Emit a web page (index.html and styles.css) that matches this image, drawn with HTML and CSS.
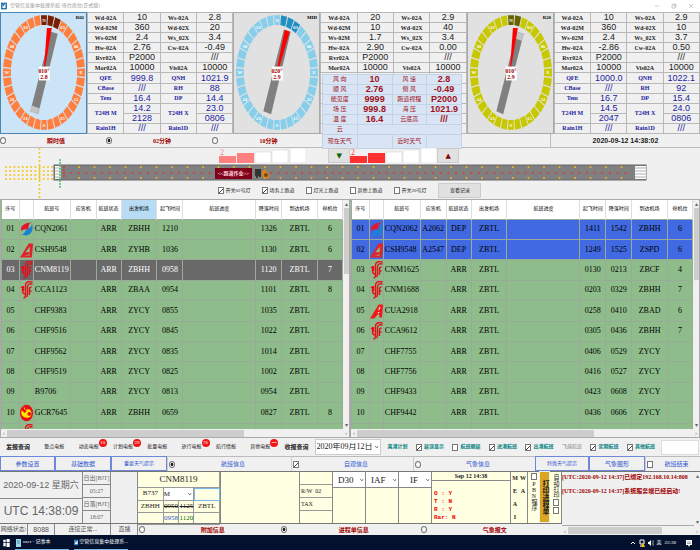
FILE: index.html
```html
<!DOCTYPE html>
<html lang="zh-CN">
<head>
    <meta charset="UTF-8">
    <meta name="viewport" content="width=device-width, initial-scale=1.0">
    <title>空管信息集中处理系统</title>
    <link rel="stylesheet" href="styles.css">
</head>
<body>
    <svg class="defs" width="0" height="0">
        <symbol id="logo-cqn" viewBox="0 0 12 14">
            <path d="M1 8C0 4 5 1 11 1 8 2 8 4 8 6 7 9 4 6 1 9Z" fill="#e01830"/>
            <path d="M1 12C5 12 4 9 6 8 9 6 11 5 11 2 13 8 10 13 5 13Z" fill="#1583d6"/>
        </symbol>
        <symbol id="logo-csh" viewBox="0 0 12 14">
            <path d="M0 14 8 1h4l-1 13Z" fill="#e0222c"/>
            <path d="M5 9l4-5v5ZM4 12l5-1v1Z" fill="#8fbc8b"/>
        </symbol>
        <symbol id="logo-cca" viewBox="0 0 12 18">
            <path d="M12 1C8 0 5 1 5 4v10q0 3-2 3M12 3Q7 2 7 6v7q0 2-1 3M2 5v5q0 3 3 3M1 6v1M9 14V8q0-2 2-2M9 10h2M3 5v5" fill="none" stroke="#e3101c" stroke-width="1.400"/>
        </symbol>
        <symbol id="logo-cua" viewBox="0 0 12 14">
            <path d="M0 14 8 1h4l-1 12H9L8 9 4 14Z" fill="#f01818"/>
            <path d="M8 4l2-1-2 4ZM7 8h2l-1 1Z" fill="#fff"/>
        </symbol>
        <symbol id="logo-gcr" viewBox="0 0 14 18">
            <ellipse cx="7" cy="9" rx="7" ry="9" fill="#e80c14"/>
            <path d="M4 2C4 6 6 6 9 5c4 0 5 8 0 9-6 1-9-4-7-8l3 3 2-2Z" fill="#ffe600"/>
            <circle cx="10" cy="10" r="2" fill="#e80c14"/>
        </symbol>
    </svg>

    <header class="titlebar">
        <svg class="app-icon" viewBox="0 0 8 9"><rect width="8" height="9" fill="#2878b4"/><path d="M2 2l1 3 3-4v6H2Z" fill="#fff"/></svg>
        <span>空管信息集中处理系统-塔台席位[正式版]</span>
        <div class="window-buttons">
            <button aria-label="minimize"><svg viewBox="0 0 6 6"><path d="M1 3h4"/></svg></button>
            <button aria-label="restore"><svg viewBox="0 0 6 6"><path d="M1 2h3v3H1ZM2 2V1h3v3H4"/></svg></button>
            <button aria-label="close"><svg viewBox="0 0 6 6"><path d="M1 1l4 4M5 1L1 5"/></svg></button>
        </div>
    </header>

    <main class="weather" id="weather">
        <div class="summary">
            <table>
                <tr><th>风 向</th><td>10</td><th>风 速</th><td>2.8</td></tr>
                <tr><th>顺 风</th><td>2.76</td><th>侧 风</th><td>-0.49</td></tr>
                <tr><th>能见度</th><td>9999</td><th>跑道视程</th><td>P2000</td></tr>
                <tr><th>场 压</th><td>999.8</td><th>海 压</th><td>1021.9</td></tr>
                <tr><th>温 度</th><td>16.4</td><th>云底高</th><td>///</td></tr>
                <tr><th>云</th><td colspan="3"></td></tr>
                <tr><th>现在天气</th><td></td><th>近时天气</th><td></td></tr>
            </table>
        </div>
    </main>

    <div class="period">
        <label><input type="radio" name="period"><span>瞬时值</span></label>
        <label><input type="radio" name="period" checked><span>02分钟</span></label>
        <label><input type="radio" name="period"><span>10分钟</span></label>
        <div></div>
        <div></div>
        <time>2020-09-12 14:38:02</time>
    </div>

    <section class="runway">
        <svg class="runway-map" id="runway" viewBox="0 0 700 51" preserveAspectRatio="none"></svg>
        <div class="steps">
            <svg class="bars pink" viewBox="0 0 87 15" preserveAspectRatio="none"><path class="on" d="M0 8h17v7H0ZM18 5h17v10H18Z"/><path class="off" d="M36 4h16v11H36ZM53 2h16v13H53ZM71 0h16v15H71Z"/><text x="1" y="7">2</text></svg>
            <button class="arrow down">▼</button>
            <svg class="bars red" viewBox="0 0 87 15" preserveAspectRatio="none"><path class="on" d="M0 8h17v7H0ZM18 5h17v10H18Z"/><path class="off" d="M36 4h16v11H36ZM53 2h16v13H53ZM71 0h16v15H71Z"/><text x="1" y="7">2</text></svg>
            <button class="arrow up">▲</button>
        </div>
        <div class="work">
            <b>&lt;&lt;跑道作业&gt;&gt;</b>
            <svg viewBox="0 0 16 11"><path d="M1 1h6v7H1ZM2 8h2v2H2ZM5 7h2v2H5Z" fill="#333"/><path d="M8 7V3l4-2v3h2l2 5-2 1H9Z" fill="#d98220"/><circle cx="12" cy="7" r="2" fill="#7a4a10"/></svg>
        </div>
        <div class="lights">
            <label><input type="checkbox" checked>开关02号灯</label>
            <label><input type="checkbox" checked>场务上跑道</label>
            <label><input type="checkbox">灯光上跑道</label>
            <label><input type="checkbox">其他上跑道</label>
            <label><input type="checkbox">开关20号灯</label>
            <button>查看记录</button>
        </div>
    </section>

    <section class="flights">
        <div class="list">
            <div class="list-view"><table class="arrivals" id="arrivals"></table></div>
            <div class="vbar"><i>▴</i><b class="thumb-short"></b><i>▾</i></div>
            <div class="hbar"><i>‹</i><b></b><i>›</i></div>
        </div>
        <div class="list">
            <div class="list-view"><table class="departures" id="departures"></table></div>
            <div class="vbar"><i>▴</i><b></b><i>▾</i></div>
            <div class="hbar"><i>‹</i><b></b><i>›</i></div>
        </div>
    </section>

    <nav class="toolbar">
        <div class="telegrams">
            <strong>发报查询</strong>
            <button>整点电报</button>
            <button>动态电报<em>10</em></button>
            <button>计划电报<em>29</em></button>
            <button>批量电报</button>
            <button>放行电报<em>76</em></button>
            <button>航行情报</button>
            <button>其他电报<em>•••</em></button>
            <strong>收报查询</strong>
        </div>
        <select class="date" aria-label="日期"><option>2020年09月12日</option></select>
        <div class="filters">
            <a href="#">离港计划</a>
            <label><input type="checkbox" checked>延误显示</label>
            <label><input type="checkbox">航班顺延</label>
            <label><input type="checkbox" checked>进港航班</label>
            <label><input type="checkbox" checked>出港航班</label>
            <span>飞越航班</span>
            <label><input type="checkbox" checked>定期航班</label>
            <label><input type="checkbox" checked>其他航班</label>
        </div>
        <input class="search" type="text" aria-label="查询">
    </nav>

    <div class="tabs">
        <button>参数设置</button>
        <button>基础数据</button>
        <button class="small">重要天气提示</button>
        <label><input type="radio" name="tab" checked><span>航班信息</span></label>
        <label><input type="checkbox" checked><span>自观信息</span></label>
        <label><input type="radio" name="tab"><span>气象信息</span></label>
        <button class="small">特殊天气提示</button>
        <button>气象图形</button>
        <label><input type="checkbox"><span>航班结束</span></label>
    </div>

    <section class="bottom">
        <div class="clock">
            <div class="today">2020-09-12 星期六</div>
            <div class="utc">UTC 14:38:09</div>
            <div class="sun">
                <span>日出[BJT]</span><span>05:27</span><span>日落[BJT]</span><span>18:07</span>
            </div>
            <div class="blank"></div>
        </div>
        <div class="strip">
            <div class="callsign">CNM8119</div>
            <div class="cell">B737</div>
            <select aria-label="机型等级"><option>M</option></select>
            <input type="text" aria-label="备注">
            <div class="cell">ZBHH</div>
            <div class="cell"><s>0950</s></div>
            <div class="cell"><s>1125</s></div>
            <div class="cell">ZBTL</div>
            <div class="cell"></div>
            <div class="cell off-block">0958</div>
            <div class="cell landing">1120</div>
            <div class="cell"></div>
        </div>
        <div class="strip-blank"></div>
        <div class="strip-runway"><span></span><span>R/W &nbsp;02</span><span>TAX</span><span></span></div>
        <div class="strip-proc"><select aria-label="D30"><option>D30</option></select></div>
        <div class="strip-proc"><select aria-label="IAF"><option>IAF</option></select></div>
        <div class="strip-proc"><select aria-label="IF"><option>IF</option></select></div>
        <div class="strip-info">
            <div class="stamp">Sep 12 14:38</div>
            <pre>O : Y
T : N
R : Y
Rar: N</pre>
        </div>
        <div class="letters"><span>M</span><span>W</span><span>E</span><span>A</span><span>A</span><span></span><span>I</span><span></span></div>
        <label class="upright pbn"><input type="checkbox">PBN程序</label>
        <button class="upright print">打印进程单</button>
        <div class="upright auto">自动打印<input type="checkbox" aria-label="自动打印进港"><input type="checkbox" aria-label="自动打印离港"></div>
        <div class="log">
            <div class="log-text">
                <p>[UTC:2020-09-12 14:37]已绑定192.168.10.14:808</p>
                <p>[UTC:2020-09-12 14:37]系统服务端已经启动!</p>
            </div>
            <div class="vbar"><i>▴</i><i>▾</i></div>
            <div class="hbar"><i>‹</i><b></b><i>›</i></div>
        </div>
        <div class="status">
            <span>网络状态:</span><span class="port">8088</span><span>连接正常...</span><span>直播</span>
            <label><input type="radio" name="msg"><b>附加信息</b></label>
            <label><input type="radio" name="msg" checked><b>进程单信息</b></label>
            <label><input type="radio" name="msg"><b>气象报文</b></label>
        </div>
    </section>

    <footer class="taskbar">
        <svg class="start" viewBox="0 0 8 10"><path d="M0 1h3v3H0ZM4 0h4v4H4ZM0 5h3v4H0ZM4 5h4v5H4Z" fill="#fff"/></svg>
        <button><svg viewBox="0 0 7 9"><rect x="1" y="1" width="5" height="8" fill="#9fd8ea"/><path d="M2 3h3M2 5h3" stroke="#4a8fa8"/></svg>user - 记事本</button>
        <button><svg viewBox="0 0 7 9"><rect width="7" height="9" fill="#2f83c0"/><path d="M2 2l1 3 3-4v6H2Z" fill="#fff"/></svg>空管信息集中处理系...</button>
        <div class="tray">
            <svg viewBox="0 0 6 8"><path d="M1 5l2-2 2 2" fill="none" stroke="#fff"/></svg>
            <svg viewBox="0 0 6 8"><path d="M1 1h4v4H1ZM1 7h4" fill="none" stroke="#fff"/><path d="M2 8l2-5 2 5Z" fill="#f5b81c"/></svg>
            <svg viewBox="0 0 6 8"><path d="M0 3h1l2-2v6L1 5H0Z" fill="#fff"/><path d="M4 2q1 2 0 4M5 1q2 3 0 6" fill="none" stroke="#ccc" stroke-width=".5"/></svg>
            <span>英</span>
            <span>22:38</span>
            <svg class="notes" viewBox="0 0 6 8"><path d="M0 1h6v5H4L3 8 2 6H0Z" fill="#fff"/><path d="M1 3h4M1 4.500h4" stroke="#345" stroke-width=".5"/></svg>
        </div>
    </footer>

    <script>
        const stations = [
            {
                name: 'R02', dir: '010°', speed: '2.8', panel: 'blue', ring: '#ff7f3f', dark: '#7a2000', on: [0, 1, 2],
                bar: '51,19 58,21 38,102 30,99', mark: '31,93 39,96 38,102 30,99', wedge: '47,15 52,15 45,56 44,56',
                values: ['10', '2.8', '360', '20', '2.4', '3.4', '2.76', '-0.49', 'P2000', '///', '10000', '10000', '999.8', '1021.9', '///', '88', '16.4', '14.4', '14.2', '23.0', '2128', '0806', '///', '///']
            },
            {
                name: 'MID', dir: '020°', speed: '2.9', panel: 'grey', ring: '#87ceeb', dark: '#1f8fc4', on: [1, 2, 3],
                bar: '51,17 58,19 38,102 30,99', mark: '', wedge: '52,17 57,19 46,56 44,56',
                values: ['20', '2.9', '10', '40', '1.7', '3.4', '2.90', '0.00', 'P2000', '///', '10000', '10000']
            },
            {
                name: 'R20', dir: '010°', speed: '2.9', panel: 'grey', ring: '#c8c800', dark: '#646400', on: [0, 1],
                bar: '50,19 57,21 36,102 29,99', mark: '50,19 57,21 55,28 49,26', wedge: '46,15 51,15 44,56 43,56',
                values: ['10', '2.9', '360', '10', '2.4', '3.7', '-2.86', '0.50', 'P2000', '///', '10000', '10000', '1000.0', '1022.1', '///', '92', '16.7', '15.4', '14.5', '24.0', '2047', '0806', '///', '///']
            }
        ];
        const names = ['Wd-02A', 'Ws-02A', 'Wd-02M', 'Wd-02X', 'Ws-02M', 'Ws_02X', 'Hw-02A', 'Cw-02A', 'Rvr02A', '', 'Mor02A', 'Vis02A', 'QFE', 'QNH', 'CBase', 'RH', 'Tem', 'DP', 'T24H M', 'T24H X', '', '', 'Rain1H', 'Rain1D'];
        const points = ['N', '03', '06', 'E', '12', '15', 'S', '21', '24', 'W', '30', '33'];

        function polar(deg, rx, ry) {
            const a = deg * Math.PI / 180;
            return (44 + Math.sin(a) * rx).toFixed(1) + ' ' + (60 - Math.cos(a) * ry).toFixed(1);
        }

        function gauge(s) {
            let out = '';
            for (let i = 0; i < 36; i++) {
                const a = i * 10 - 4.3;
                const b = i * 10 + 4.3;
                const fill = s.on.includes(i) ? s.dark : s.ring;
                out += `<path fill="${fill}" d="M${polar(a, 42, 58)}L${polar(b, 42, 58)}L${polar(b, 34, 48)}L${polar(a, 34, 48)}Z"/>`;
            }
            points.forEach((p, i) => {
                const [x, y] = polar(i * 30, 38, 53).split(' ');
                out += `<text class="point" x="${x}" y="${+y + 2}">${p}</text>`;
            });
            out += `<polygon points="${s.bar}" fill="#808080"/><polygon points="${s.mark}" fill="#c4c4c4"/>`;
            out += `<polygon points="${s.wedge}" fill="#f00"/>`;
            out += '<rect x="39" y="54" width="11" height="14" fill="#fff"/>';
            out += `<text class="reading" x="44" y="60">${s.dir}</text><text class="reading" x="44" y="67">${s.speed}</text>`;
            out += `<text class="station" x="85" y="6">${s.name}</text>`;
            return `<svg class="gauge ${s.panel}" viewBox="0 0 87 121" preserveAspectRatio="none">${out}</svg>`;
        }

        // a station without pressure data keeps its lower rows empty
        function readings(s) {
            const value = n => s.values[n] || '';
            let rows = '';
            for (let r = 0; r < 12; r++) {
                const span = r === 9 ? ' rowspan="2"' : '';
                const label = n => r === 10 ? '' : `<th${span}>${n < s.values.length ? names[n] : ''}</th>`;
                rows += `<tr class="${r > 5 ? 'pressure' : ''}">${label(r * 2)}<td>${value(r * 2)}</td>${label(r * 2 + 1)}<td>${value(r * 2 + 1)}</td></tr>`;
            }
            return `<table class="readings">${rows}</table>`;
        }

        document.getElementById('weather').insertAdjacentHTML('afterbegin',
            stations.map(s => `<div class="station-panel">${gauge(s)}${readings(s)}</div>`).join(''));

        // runway lights
        function dot(x, y, color) {
            return `<circle cx="${x}" cy="${y}" r="1" fill="${color}"/>`;
        }
        let map = '<rect x="54" y="17" width="592" height="15" fill="#808080" stroke="#666"/>';
        map += '<path d="M55 18h6v13h-6ZM635 18h11v13h-11Z" fill="#fff"/><path d="M55 20h6M55 23h6M55 26h6M55 29h6M635 20h11M635 23h11M635 26h11M635 29h11" stroke="#777" stroke-width=".6"/>';
        for (let i = 0; i < 12; i++) [19, 23, 27, 31].forEach(y => map += dot(6 + i * 4.2, y, '#f5c518'));
        for (let y = 1; y < 51; y += 4) map += dot(39.5, y, '#f5c518');
        for (let y = 12; y < 40; y += 3) map += dot(60, y, '#3cc46c');
        for (let y = 19; y < 31; y += 3) map += dot(64, y, '#d33');
        for (let x = 71; x < 632; x += 7.7) map += dot(x, 25, '#e03a3a');
        for (let x = 79; x < 625; x += 15.5) map += dot(x, 19, '#e8b818') + dot(x, 30, '#e8b818');
        document.getElementById('runway').innerHTML = map;

        const arrivals = [
            ['cqn', 'CQN2061', '', 'ARR', 'ZBHH', '1210', '', '1326', 'ZBTL', '6'],
            ['csh', 'CSH9548', '', 'ARR', 'ZYHB', '1036', '', '1130', 'ZBTL', '6'],
            ['cca', 'CNM8119', '', 'ARR', 'ZBHH', '0958', '', '1120', 'ZBTL', '7'],
            ['cca', 'CCA1123', '', 'ARR', 'ZBAA', '0954', '', '1101', 'ZBTL', '8'],
            ['', 'CHF9383', '', 'ARR', 'ZYCY', '0855', '', '1035', 'ZBTL', ''],
            ['', 'CHF9516', '', 'ARR', 'ZYCY', '0845', '', '1022', 'ZBTL', ''],
            ['', 'CHF9562', '', 'ARR', 'ZYCY', '0835', '', '1014', 'ZBTL', ''],
            ['', 'CHF9519', '', 'ARR', 'ZYCY', '0825', '', '1002', 'ZBTL', ''],
            ['', 'B9706', '', 'ARR', 'ZYCY', '0813', '', '0954', 'ZBTL', ''],
            ['gcr', 'GCR7645', '', 'ARR', 'ZBHH', '0659', '', '0827', 'ZBTL', '8'],
            ['cca', '', '', '', '', '', '', '', '', '']
        ];
        const departures = [
            ['cqn', 'CQN2062', 'A2062', 'DEP', 'ZBTL', '', '1411', '1542', 'ZBHH', '6'],
            ['csh', 'CSH9548', 'A2547', 'DEP', 'ZBTL', '', '1249', '1525', 'ZSPD', '6'],
            ['cca', 'CNM1625', '', 'ARR', 'ZBTL', '', '0130', '0213', 'ZBCF', '4'],
            ['cca', 'CNM1688', '', 'ARR', 'ZBTL', '', '0203', '0329', 'ZBHH', '7'],
            ['cua', 'CUA2918', '', 'ARR', 'ZBTL', '', '0258', '0410', 'ZBAD', '6'],
            ['cca', 'CCA9612', '', 'ARR', 'ZBTL', '', '0305', '0436', 'ZBHH', '7'],
            ['', 'CHF7755', '', 'ARR', 'ZBTL', '', '0406', '0529', 'ZYCY', ''],
            ['', 'CHF7756', '', 'ARR', 'ZBTL', '', '0416', '0527', 'ZYCY', ''],
            ['', 'CHF9433', '', 'ARR', 'ZBTL', '', '0423', '0608', 'ZYCY', ''],
            ['', 'CHF9442', '', 'ARR', 'ZBTL', '', '0436', '0606', 'ZYCY', ''],
            ['', '', '', '', '', '', '', '', '', '']
        ];

        function fillTable(id, widths, heads, flights, sorted, rowClass) {
            let out = '<colgroup>' + widths.map(w => `<col style="width:${(w / 342 * 100).toFixed(2)}%">`).join('') + '</colgroup>';
            out += '<thead><tr>' + heads.map((h, i) => `<th class="${i === sorted ? 'sorted' : ''}">${h}</th>`).join('') + '</tr></thead><tbody>';
            flights.forEach((f, i) => {
                const no = f[1] ? String(i + 1).padStart(2, '0') : '';
                const logo = f[0] ? `<svg><use href="#logo-${f[0]}"/></svg>` : '';
                out += `<tr class="${rowClass(i)}"><td>${no}</td><td class="logo">${logo}</td>`;
                out += f.slice(1).map((v, n) => `<td class="${n ? '' : 'flight'}">${v}</td>`).join('') + '</tr>';
            });
            document.getElementById(id).innerHTML = out + '</tbody>';
        }

        fillTable('arrivals', [18, 14, 37, 26, 25, 36, 26, 73, 26, 36, 25],
            ['序号', '', '航班号', '应答机', '航班状态', '出发机场', '起飞时间', '航班进度', '降落时间', '到达机场', '停机位'],
            arrivals, 5, i => i === 2 ? 'selected' : '');
        fillTable('departures', [18, 14, 37, 26, 25, 36, 73, 26, 26, 36, 25],
            ['序号', '', '航班号', '应答机', '航班状态', '出发机场', '航班进度', '起飞时间', '降落时间', '到达机场', '停机位'],
            departures, -1, i => i < 2 ? 'departing' : '');
    </script>
</body>
</html>
```
FILE: styles.css
```css
* {
    box-sizing: border-box;
}
body {
    margin: 0;
    height: 100vh;
    display: flex;
    flex-direction: column;
    overflow: hidden;
    background: #f0f0f0;
    color: #222;
    font-family: "Liberation Serif", "Noto Sans CJK SC", serif;
    font-size: 6px;
    line-height: 8px;
    white-space: nowrap;
}
button, input, select {
    font: inherit;
    color: inherit;
    margin: 0;
    padding: 0;
    border: none;
    border-radius: 0;
    background: none;
}
table {
    border-collapse: collapse;
    table-layout: fixed;
}
th, td {
    padding: 0;
    text-align: center;
    font-weight: normal;
}
label {
    display: flex;
    align-items: center;
}
.defs {
    position: absolute;
}
input[type="checkbox"], input[type="radio"] {
    appearance: none;
    flex: none;
    width: 6px;
    height: 7px;
    border: 1px solid #777;
    background: #fff;
}
input[type="radio"] {
    border-radius: 50%;
}
input[type="radio"]:checked {
    background: radial-gradient(#222 40%, #fff 60%);
}
input[type="checkbox"]:checked {
    background: linear-gradient(135deg, #fff 45%, #444 45%, #444 60%, #fff 60%);
}
select {
    appearance: none;
    background: #fff url("data:image/svg+xml,%3Csvg xmlns='http://www.w3.org/2000/svg' width='5' height='4'%3E%3Cpath d='M1 1l2 2 1-2' fill='none' stroke='%23888'/%3E%3C/svg%3E") no-repeat right 1px center;
}

/* title bar */
.titlebar {
    display: flex;
    align-items: center;
    gap: 3px;
    height: 12px;
    padding-left: 1px;
    background: #fff;
    color: #999;
    font-size: 5px;
}
.app-icon {
    width: 6px;
    height: 8px;
}
.window-buttons {
    display: flex;
    gap: 11px;
    margin-left: auto;
    padding-right: 6px;
}
.window-buttons svg {
    display: block;
    width: 6px;
    height: 6px;
    fill: none;
    stroke: #999;
    stroke-width: 0.5;
}

/* wind gauges and readings */
.weather {
    position: relative;
    display: grid;
    grid-template-columns: repeat(3, 1fr);
    height: 122px;
}
.station-panel {
    display: grid;
    grid-template-columns: 87px 1fr;
}
.gauge {
    width: 87px;
    height: 122px;
    border: 1px solid #aaa;
    background: #e1e1e1;
}
.gauge.blue {
    background: #cce4f7;
    border-color: #4a86b4;
}
.gauge text {
    font-size: 5px;
    font-weight: bold;
}
.gauge .point {
    fill: #fff;
    text-anchor: middle;
}
.gauge .reading {
    fill: #a00000;
    font-size: 6px;
    text-anchor: middle;
}
.gauge .station {
    text-anchor: end;
}
.readings {
    width: 100%;
    height: 122px;
    font-size: 9px;
    font-family: "Liberation Sans", sans-serif;
}
.readings th, .readings td {
    height: 10px;
    border: 1px solid #b8b8b8;
    line-height: 9px;
}
.readings th {
    font: bold 6px/8px "Liberation Serif", serif;
}
.readings .pressure {
    color: #1c1ca0;
}
.summary {
    position: absolute;
    top: 62px;
    left: 46%;
    width: 20%;
    background: #d9e5f4;
    color: #a01020;
}
.summary table {
    width: 100%;
}
.summary th, .summary td {
    width: 25%;
    height: 10px;
    line-height: 9px;
    border: 1px solid #c4d2e6;
}
.summary td {
    font: bold 9px/9px "Liberation Sans", sans-serif;
}
.summary tr:last-child > * {
    height: 14px;
}
.period {
    display: grid;
    grid-template-columns: 106fr 106fr 107fr 146fr 85fr 150fr;
    height: 14px;
    border-bottom: 1px solid #bbb;
}
.period label, .period time {
    display: flex;
    align-items: center;
    color: #a00000;
    font-weight: bold;
    font-size: 6px;
}
.period span {
    flex: 1;
    text-align: center;
}
.period time {
    justify-content: center;
    border-left: 1px solid #bbb;
    color: #222;
    font-family: "Liberation Sans", sans-serif;
    font-size: 7px;
}

/* runway */
.runway {
    position: relative;
    display: flex;
    flex-direction: column;
    height: 51px;
}
.runway-map {
    position: absolute;
    width: 100%;
    height: 51px;
}
.steps, .work, .lights {
    position: relative;
    display: flex;
    align-items: center;
}
.steps {
    height: 15px;
    padding-left: 31.3%;
}
.bars {
    width: 87px;
    height: 15px;
    font-size: 8px;
}
.bars .off {
    fill: #fff;
    stroke: #ccc;
    stroke-width: 0.5;
}
.pink {
    fill: #ff8080;
}
.red {
    fill: #ff3030;
}
.arrow {
    width: 22px;
    height: 15px;
    background: #e1e1e1;
    border: 1px solid #ccc;
    font-family: "DejaVu Sans", sans-serif;
    font-size: 7px;
}
.arrow.down {
    margin-left: 22px;
    color: #006400;
}
.arrow.up {
    color: #8b0000;
}
.work {
    height: 20px;
    padding-left: 30.7%;
    gap: 2px;
}
.work b {
    width: 37px;
    background: #80001c;
    color: #ffd8dc;
    line-height: 11px;
    font-size: 5px;
    text-align: center;
}
.work svg {
    width: 16px;
    height: 11px;
}
.lights {
    height: 15px;
    padding-left: 31.2%;
    font-size: 5px;
}
.lights label {
    width: 44px;
    gap: 1px;
}
.lights button {
    width: 43px;
    height: 15px;
    background: #e1e1e1;
    border: 1px solid #ccc;
    font-size: 5px;
}

/* flight lists */
.flights {
    flex: 1;
    display: grid;
    grid-template-columns: 1fr 1fr;
    min-height: 0;
}
.list {
    display: grid;
    grid-template-columns: 1fr 6px;
    grid-template-rows: 1fr 8px;
    min-height: 0;
    border: 1px solid #aaa;
}
.list-view {
    overflow: hidden;
}
.list table {
    width: 100%;
    height: 244px;
    background: #8fbc8b;
    color: #000;
    font-size: 8px;
}
.list th {
    height: 19px;
    background: #fff;
    border-right: 1px solid #ddd;
    font-size: 5px;
}
.list th.sorted {
    background: #b8dcf4;
}
.list td {
    border: 1px solid #98aa98;
    line-height: 18px;
    height: 20px;
}
.list .flight {
    padding-left: 1px;
    text-align: left;
}
.logo svg {
    display: block;
    width: 13px;
    height: 18px;
}
.list .selected {
    background: #696969;
    color: #fff;
}
.departing {
    background: #4169e1;
}
.vbar, .hbar {
    display: flex;
    justify-content: space-between;
    align-items: center;
    background: #f0f0f0;
    color: #666;
}
.vbar {
    flex-direction: column;
}
.vbar i, .hbar i {
    font-style: normal;
    font-size: 6px;
    width: 6px;
    text-align: center;
}
.vbar b {
    width: 5px;
    height: 72px;
    margin-bottom: auto;
    background: #cdcdcd;
}
.vbar .thumb-short {
    height: 66px;
}
.hbar {
    grid-column: 1 / -1;
}
.hbar b {
    width: 68%;
    height: 7px;
    margin-right: auto;
    background: #cdcdcd;
}

/* toolbar */
.toolbar {
    display: grid;
    grid-template-columns: 315fr 67fr 280fr 38fr;
    align-items: center;
    height: 18px;
    padding-right: 1px;
    font-size: 5px;
}
.telegrams, .filters {
    display: flex;
    justify-content: space-between;
    align-items: center;
    padding: 0 6px;
}
.telegrams button {
    position: relative;
}
.telegrams strong {
    font-size: 6px;
}
.telegrams em {
    position: absolute;
    left: 100%;
    top: -4px;
    width: 8px;
    height: 8px;
    border-radius: 50%;
    background: #f01414;
    color: #fff;
    font-style: normal;
}
.date {
    height: 16px;
    padding-left: 1px;
    border: 1px solid #ccc;
    font-size: 8px;
}
.filters {
    color: #008080;
    font-weight: bold;
}
.filters a {
    color: inherit;
    text-decoration: none;
}
.filters label {
    gap: 2px;
}
.filters span {
    color: #888;
    font-weight: normal;
}
.search {
    width: 100%;
    height: 15px;
    border: 1px solid #ddd;
    background: #fff;
}

/* tabs */
.tabs {
    display: grid;
    grid-template-columns: 55fr 56fr 56fr 124fr 122fr 122fr 54fr 56fr 55fr;
    height: 15px;
    color: #3058d0;
    font-size: 6px;
}
.tabs button {
    border: 1px solid #6c88d8;
}
.tabs .small {
    font-size: 5px;
}
.tabs label {
    border-top: 1px solid #bbb;
    border-left: 1px solid #ccc;
    padding-left: 1px;
}
.tabs label span {
    flex: 1;
    text-align: center;
}

/* clock, progress strip and log */
.bottom {
    display: grid;
    grid-template-columns: 138fr 83fr 79fr 33fr 33fr 33fr 33fr 79fr 17fr 11fr 11fr 12fr 138fr;
    grid-template-rows: 52px 12px;
}
.bottom > div, .bottom > label {
    border-top: 1px solid #777;
}
.clock {
    display: grid;
    grid-template-columns: 83fr 28fr 27fr;
    grid-template-rows: 1fr 1fr;
    color: #666;
}
.clock > div {
    min-width: 0;
    border-right: 1px solid #888;
}
.today, .utc {
    display: flex;
    align-items: center;
    justify-content: center;
    font-size: 9px;
    font-family: "Liberation Sans", "Noto Sans CJK SC", sans-serif;
}
.utc {
    grid-row: 2;
    border-top: 1px solid #888;
    font-size: 12px;
}
.sun, .blank {
    grid-column: 2;
    grid-row: 1 / 3;
}
.sun {
    display: grid;
    text-align: center;
}
.sun span {
    border-bottom: 1px solid #888;
    line-height: 12px;
}
.clock .blank {
    grid-column: 3;
}
.strip, .strip-blank, .strip-runway, .strip-proc, .strip-info, .letters, .pbn, .auto {
    background: #ffffe1;
    border-right: 1px solid #888;
}
.strip {
    display: grid;
    grid-template-columns: 26fr 16fr 15fr 26fr;
    grid-template-rows: 16fr 12fr 12fr 12fr;
    font-size: 7px;
}
.strip > * {
    min-width: 0;
    border: solid #999;
    border-width: 0 1px 1px 0;
    text-align: center;
    line-height: 11px;
}
.strip .callsign {
    grid-column: 1 / -1;
    font-size: 9px;
    line-height: 15px;
}
.strip select {
    grid-column: span 2;
    text-align: left;
}
.strip input {
    border: 1px solid #78b8ec;
}
.strip .off-block {
    color: #3058d0;
}
.strip .landing {
    color: #007000;
}
.strip-runway {
    display: grid;
    grid-template-rows: repeat(4, 1fr);
    font-size: 6px;
}
.strip-runway span {
    padding-left: 1px;
    border-bottom: 1px solid #999;
    line-height: 12px;
}
.strip-runway span:last-child {
    border: none;
}
.strip-proc select {
    width: 100%;
    height: 16px;
    padding-left: 5px;
    border-bottom: 1px solid #888;
    font-size: 9px;
}
.strip-proc:nth-child(7) select {
    padding-left: 11px;
}
.stamp {
    border-bottom: 1px solid #888;
    text-align: center;
    font-weight: bold;
}
.strip-info pre {
    margin: 9px 0 0 2px;
    color: #f00000;
    font: bold 6px/8px "Liberation Mono", monospace;
}
.letters {
    display: grid;
    grid-template-columns: 1fr 1fr;
    place-items: center;
    font-weight: bold;
}
.upright {
    display: flex;
    align-items: center;
    gap: 1px;
    writing-mode: vertical-rl;
    text-orientation: upright;
    line-height: 9px;
}
.pbn {
    padding-top: 1px;
    border-right: none;
}
.print {
    justify-content: center;
    margin: 1px;
    background: #daa520;
    font-size: 7px;
    font-weight: bold;
}
.auto {
    padding-top: 2px;
    font-size: 6px;
}
.log {
    grid-column: 13;
    grid-row: 1 / 3;
    display: grid;
    grid-template-columns: 1fr 6px;
    grid-template-rows: 1fr 9px;
    min-width: 0;
}
.log-text {
    min-width: 0;
    overflow: hidden;
    border-bottom: 1px solid #aaa;
    color: #a00000;
    font-weight: bold;
}
.log p {
    margin: 1px 0 6px;
}
.status {
    grid-column: 1 / 13;
    grid-row: 2;
    display: grid;
    grid-template-columns: 28fr 27fr 56fr 27fr 141fr 140fr 141fr;
    color: #555;
}
.status > span {
    min-width: 0;
    border-right: 1px solid #888;
    text-align: center;
    line-height: 11px;
}
.status .port {
    font-family: "Liberation Sans", sans-serif;
    font-size: 7px;
}
.status label {
    padding-left: 1px;
}
.status b {
    flex: 1;
    text-align: center;
    color: #a00000;
}

/* taskbar */
.taskbar {
    display: flex;
    align-items: center;
    gap: 5px;
    height: 15px;
    padding: 0 8px 0 3px;
    background: #03112e;
    color: #fff;
    font-size: 5px;
}
.start {
    width: 7px;
    height: 8px;
}
.taskbar button {
    display: flex;
    align-items: center;
    gap: 1px;
    width: 54px;
    height: 15px;
    border-bottom: 1px solid #76b9ed;
}
.taskbar button svg {
    width: 7px;
    height: 9px;
}
.tray {
    display: flex;
    align-items: center;
    gap: 3px;
    margin-left: auto;
}
.tray svg {
    width: 6px;
    height: 8px;
}
.tray .notes {
    margin-left: 7px;
}
```
